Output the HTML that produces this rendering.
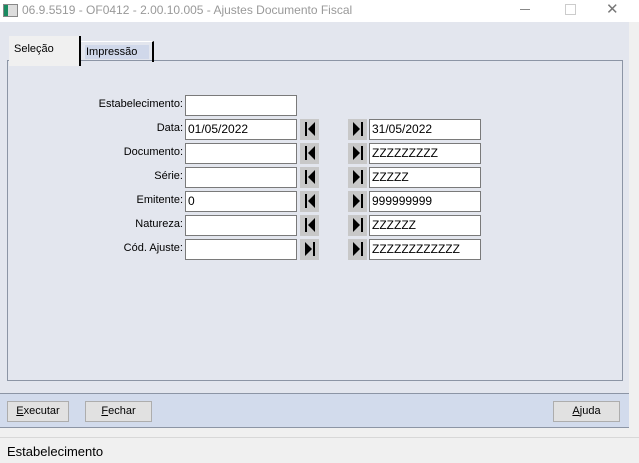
<!DOCTYPE html>
<html><head><style>
body{margin:0;width:639px;height:463px;position:relative;background:#f0f0f0;font-family:"Liberation Sans",sans-serif;font-size:11px;overflow:hidden;color:#000}
.a{position:absolute}
.title{left:0;top:0;width:639px;height:22px;background:#fff;color:#999;font-size:12px}
.main{left:0;top:22px;width:629px;height:371px;background:#e3e6ee}
.panel{left:7px;top:60px;width:614px;height:319px;border:1px solid #8c95a5}
.inp{position:absolute;border:1px solid #7a7a7a;background:#fff;box-sizing:border-box;width:112px;height:21px;padding:2px 2px;font-size:12px;line-height:15px}
.lbl{position:absolute;right:456px;text-align:right;font-size:11px}
.btn{position:absolute;top:401px;height:21px;border:1px solid #adadad;background:#e1e1e1;box-sizing:border-box;text-align:center;line-height:19px;font-size:11px}
u{text-decoration:underline}
</style></head><body>
<div class="a title">
<div class="a" style="left:3px;top:4px;width:13px;height:11px;border:1px solid #888;background:#ddd"><div style="width:4px;height:11px;background:#1a8a60"></div></div>
<div class="a" style="left:22px;top:3px;">06.9.5519 - OF0412 - 2.00.10.005 - Ajustes Documento Fiscal</div>
<div class="a" style="left:520px;top:9px;width:10px;height:1px;background:#888"></div>
<div class="a" style="left:565px;top:4px;width:9px;height:9px;border:1px solid #ccc"></div>
<div class="a" style="left:606px;top:0px;color:#777;font-size:15px">✕</div>
</div>
<div class="a main"></div>
<div class="a panel"></div>
<div class="a" style="left:9px;top:36px;width:70px;height:30px;background:#f0f0f0;border-right:2px solid #000"></div>
<div class="a" style="left:14px;top:43px">Seleção</div>
<div class="a" style="left:81px;top:41px;width:71px;height:20px;border-right:2px solid #000;border-top:1px solid #fff"></div>
<div class="a" style="left:85px;top:45px;width:64px;height:14px;background:#d0d8ea"></div>
<div class="a" style="left:86px;top:46px">Impressão</div>

<div class="lbl" style="top:98px">Estabelecimento:</div>
<div class="inp" style="left:185px;top:95px"></div>

<div class="lbl" style="top:122px">Data:</div>
<div class="inp" style="left:185px;top:119px">01/05/2022</div>
<div class="lbl" style="top:146px">Documento:</div>
<div class="inp" style="left:185px;top:143px"></div>
<div class="lbl" style="top:170px">Série:</div>
<div class="inp" style="left:185px;top:167px"></div>
<div class="lbl" style="top:194px">Emitente:</div>
<div class="inp" style="left:185px;top:191px">0</div>
<div class="lbl" style="top:218px">Natureza:</div>
<div class="inp" style="left:185px;top:215px"></div>
<div class="lbl" style="top:242px">Cód. Ajuste:</div>
<div class="inp" style="left:185px;top:239px"></div>

<div class="inp" style="left:369px;top:119px">31/05/2022</div>
<div class="inp" style="left:369px;top:143px">ZZZZZZZZZ</div>
<div class="inp" style="left:369px;top:167px">ZZZZZ</div>
<div class="inp" style="left:369px;top:191px">999999999</div>
<div class="inp" style="left:369px;top:215px">ZZZZZZ</div>
<div class="inp" style="left:369px;top:239px">ZZZZZZZZZZZZ</div>

<svg class="a" style="left:0;top:0" width="639" height="463">
<g fill="#c8c8c8">
<rect x="300" y="119" width="19" height="21"/><rect x="300" y="143" width="19" height="21"/><rect x="300" y="167" width="19" height="21"/><rect x="300" y="191" width="19" height="21"/><rect x="300" y="215" width="19" height="21"/><rect x="300" y="239" width="19" height="21"/>
<rect x="348" y="119" width="19" height="21"/><rect x="348" y="143" width="19" height="21"/><rect x="348" y="167" width="19" height="21"/><rect x="348" y="191" width="19" height="21"/><rect x="348" y="215" width="19" height="21"/><rect x="348" y="239" width="19" height="21"/>
</g>
<g fill="#000">
<g id="l"><rect x="305" y="122" width="2" height="14"/><path d="M315 122 L308 129 L315 136Z"/></g>
<use href="#l" y="24"/><use href="#l" y="48"/><use href="#l" y="72"/><use href="#l" y="96"/>
<g id="r"><path d="M353 122 L360 129 L353 136Z"/><rect x="361" y="122" width="2" height="14"/></g>
<use href="#r" y="24"/><use href="#r" y="48"/><use href="#r" y="72"/><use href="#r" y="96"/><use href="#r" y="120"/>
<use href="#r" x="-48" y="120"/>
</g>
</svg>

<div class="a" style="left:0;top:393px;width:629px;height:33px;background:#d2dbec;border-top:1px solid #8c95a5;border-bottom:1px solid #8c95a5"></div>
<div class="btn" style="left:7px;width:62px"><u>E</u>xecutar</div>
<div class="btn" style="left:85px;width:67px"><u>F</u>echar</div>
<div class="btn" style="left:553px;width:67px"><u>A</u>juda</div>
<div class="a" style="left:0;top:437px;width:639px;height:1px;background:#d8d8d8"></div>
<div class="a" style="left:7px;top:444px;font-size:13px">Estabelecimento</div>
</body></html>
